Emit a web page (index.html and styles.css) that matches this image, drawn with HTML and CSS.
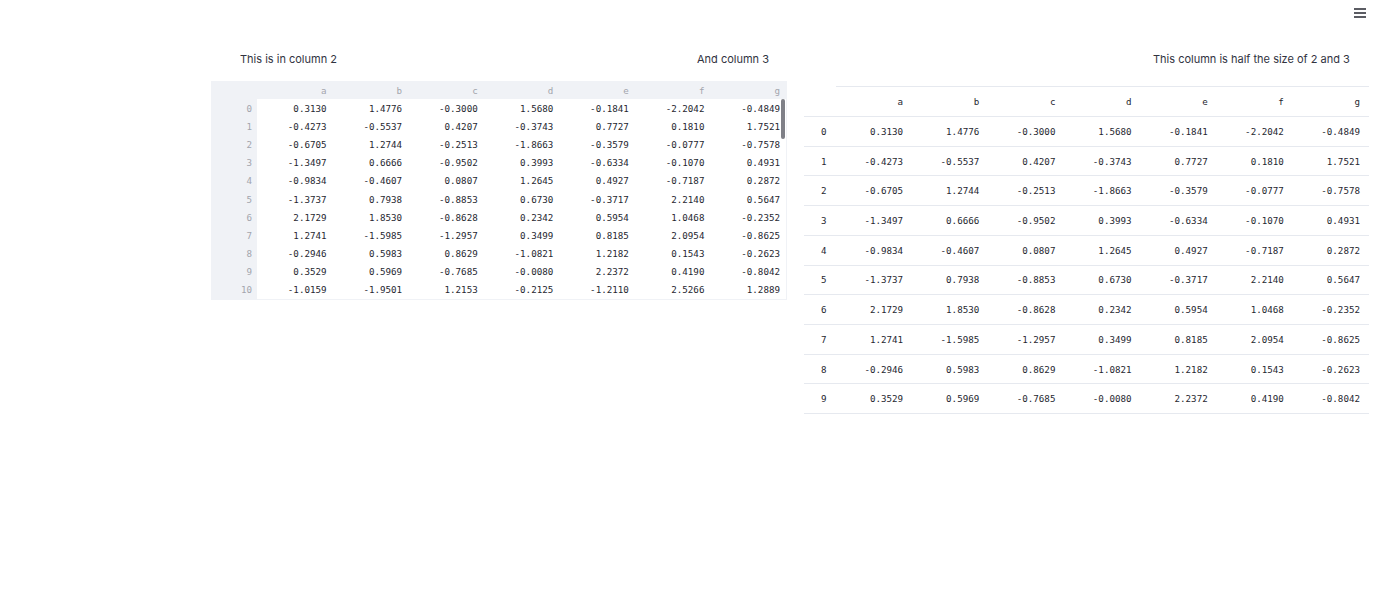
FILE: index.html
```html
<!DOCTYPE html>
<html lang="en">
<head>
<meta charset="utf-8">
<title>Columns</title>
<link rel="stylesheet" href="styles.css">
</head>
<body>
<header class="toolbar">
  <button class="menu" aria-label="Main menu">
    <svg width="12" height="10" viewBox="0 0 12 10"><path d="M0 1h12M0 5h12M0 9h12" stroke="#262730" stroke-width="1.4"/></svg>
  </button>
</header>
<main class="main">
  <div class="headings">
    <p class="heading">This is in column 2</p>
    <p class="heading">And column 3</p>
    <p class="heading">This column is half the size of 2 and 3</p>
  </div>
  <div class="tables">
    <div class="grid-wrap">
      <div class="grid" id="grid"></div>
      <div class="scrollbar"></div>
    </div>
    <table class="static">
      <thead id="thead"></thead>
      <tbody id="tbody"></tbody>
    </table>
  </div>
</main>
<script src="app.js"></script>
</body>
</html>
```
FILE: styles.css
```css
* { box-sizing: border-box; }
html, body { margin: 0; padding: 0; background: #ffffff; }
body {
  font-family: Inter, "Noto Sans", sans-serif;
  color: #31333f;
  width: 1380px;
  height: 608px;
  overflow: hidden;
}
.toolbar {
  display: flex;
  justify-content: flex-end;
  padding: 8px 14px 0 0;
  height: 30px;
}
.menu {
  border: 0;
  background: transparent;
  padding: 0;
  width: 12px;
  height: 10px;
  display: flex;
}
.main { display: flex; flex-direction: column; }
.headings {
  display: grid;
  grid-template-columns: 457px 456px 1fr;
  height: 51px;
  padding: 21px 0 0 240px;
}
.heading {
  margin: 0;
  font-size: 11px;
  line-height: 16px;
}
.tables {
  display: flex;
  align-items: flex-start;
  gap: 17px;
  padding-left: 211px;
}
.grid-wrap {
  position: relative;
  width: 576px;
  border: 1px solid #f0f2f6;
  border-top: 0;
  border-left: 0;
}
.grid {
  display: grid;
  grid-template-columns: 46px repeat(7, 1fr);
  grid-template-rows: 18px repeat(11, 18.2px);
  font-family: "DejaVu Sans Mono", monospace;
  font-size: 9.2px;
}
.grid .c {
  display: flex;
  align-items: center;
  justify-content: flex-end;
  padding-right: 6px;
  white-space: nowrap;
}
.grid .hd { background: #f0f2f6; color: #a3a5ad; }
.grid .ix { background: #f0f2f6; color: #a3a5ad; padding-right: 5px; }
.grid .dv { color: #262730; }
.scrollbar {
  position: absolute;
  right: 1px;
  top: 18px;
  width: 4px;
  height: 40px;
  border-radius: 2px;
  background: #7f8087;
}
.static {
  width: 565px;
  margin-top: 5px;
  border-collapse: collapse;
  font-family: "DejaVu Sans Mono", monospace;
  font-size: 9.2px;
  color: #262730;
}
.static th, .static td {
  text-align: right;
  padding: 0 9px 0 0;
  font-weight: normal;
  white-space: nowrap;
}
.static thead th {
  height: 30px;
  border-top: 1px solid #e6e9ef;
  border-bottom: 1px solid #e6e9ef;
}
.static thead th.blank { border-top: 0; width: 32px; }
.static tbody td, .static tbody th {
  height: 29.72px;
  border-bottom: 1px solid #e6e9ef;
}
.static tbody th { text-align: left; padding-left: 17px; padding-right: 0; }
```
FILE: app.js
```js
const data = [
  ["0.3130","1.4776","-0.3000","1.5680","-0.1841","-2.2042","-0.4849"],
  ["-0.4273","-0.5537","0.4207","-0.3743","0.7727","0.1810","1.7521"],
  ["-0.6705","1.2744","-0.2513","-1.8663","-0.3579","-0.0777","-0.7578"],
  ["-1.3497","0.6666","-0.9502","0.3993","-0.6334","-0.1070","0.4931"],
  ["-0.9834","-0.4607","0.0807","1.2645","0.4927","-0.7187","0.2872"],
  ["-1.3737","0.7938","-0.8853","0.6730","-0.3717","2.2140","0.5647"],
  ["2.1729","1.8530","-0.8628","0.2342","0.5954","1.0468","-0.2352"],
  ["1.2741","-1.5985","-1.2957","0.3499","0.8185","2.0954","-0.8625"],
  ["-0.2946","0.5983","0.8629","-1.0821","1.2182","0.1543","-0.2623"],
  ["0.3529","0.5969","-0.7685","-0.0080","2.2372","0.4190","-0.8042"],
  ["-1.0159","-1.9501","1.2153","-0.2125","-1.2110","2.5266","1.2889"]
];
const cols = ["a","b","c","d","e","f","g"];
const grid = document.getElementById("grid");
function cell(text, cls) {
  const d = document.createElement("div");
  d.className = "c " + cls;
  d.textContent = text;
  grid.appendChild(d);
}
cell("", "hd");
cols.forEach(c => cell(c, "hd"));
data.forEach((row, i) => {
  cell(String(i), "ix");
  row.forEach(v => cell(v, "dv"));
});
const thead = document.getElementById("thead");
const tr = document.createElement("tr");
const blank = document.createElement("th");
blank.className = "blank";
tr.appendChild(blank);
cols.forEach(c => { const th = document.createElement("th"); th.textContent = c; tr.appendChild(th); });
thead.appendChild(tr);
const tbody = document.getElementById("tbody");
data.slice(0, 10).forEach((row, i) => {
  const r = document.createElement("tr");
  const th = document.createElement("th");
  th.textContent = String(i);
  r.appendChild(th);
  row.forEach(v => { const td = document.createElement("td"); td.textContent = v; r.appendChild(td); });
  tbody.appendChild(r);
});
```
